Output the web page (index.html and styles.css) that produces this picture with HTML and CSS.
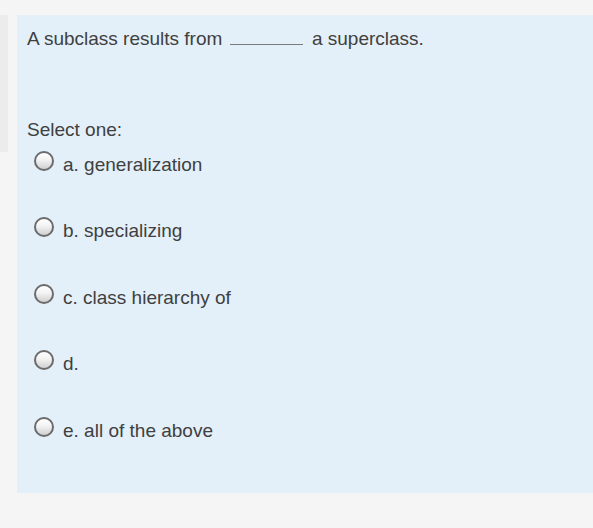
FILE: index.html
```html
<!DOCTYPE html>
<html>
<head>
<meta charset="utf-8">
<link rel="stylesheet" href="styles.css">
</head>
<body>
<div class="page">
  <div class="strip"></div>
  <div class="panel">
    <div class="qtext">A subclass results from <span class="blank"></span> a superclass.</div>
    <div class="prompt">Select one:</div>
    <div class="answers">
      <div class="option"><span class="radio"></span><span class="label">a. generalization</span></div>
      <div class="option"><span class="radio"></span><span class="label">b. specializing</span></div>
      <div class="option"><span class="radio"></span><span class="label">c. class hierarchy of</span></div>
      <div class="option"><span class="radio"></span><span class="label">d.</span></div>
      <div class="option"><span class="radio"></span><span class="label">e. all of the above</span></div>
    </div>
  </div>
</div>
</body>
</html>
```
FILE: styles.css
```css
html, body {
  margin: 0;
  padding: 0;
  background: #f5f5f5;
}
body {
  width: 593px;
  height: 528px;
  overflow: hidden;
  font-family: "Liberation Sans", Arial, sans-serif;
  font-size: 19px;
  line-height: 22px;
  color: #404040;
}
.page {
  display: flex;
  align-items: flex-start;
  padding-top: 15px;
}
.strip {
  width: 8px;
  height: 137px;
  background: #ececec;
  flex: none;
}
.panel {
  margin-left: 9px;
  flex: 1;
  height: 478px;
  box-sizing: border-box;
  background: #e3f0fa;
  padding: 13px 10px 0 10px;
}
.qtext {
  white-space: nowrap;
}
.blank {
  display: inline-block;
  width: 73px;
  height: 1px;
  border-bottom: 1px solid #7a7a7a;
  margin-left: 2px;
  margin-right: 4px;
}
.prompt {
  margin-top: 69px;
}
.answers {
  margin-top: 9.5px;
  display: flex;
  flex-direction: column;
  gap: 39.5px;
}
.option {
  white-space: nowrap;
  line-height: 27px;
  height: 27px;
}
.radio {
  display: inline-block;
  width: 20px;
  height: 20px;
  box-sizing: border-box;
  border: 2px solid #6b6b6b;
  border-radius: 50%;
  background: linear-gradient(#ffffff, #f2f2f2 45%, #d0d0d0);
  margin-left: 7px;
  margin-right: 9px;
  vertical-align: baseline;
}
```
